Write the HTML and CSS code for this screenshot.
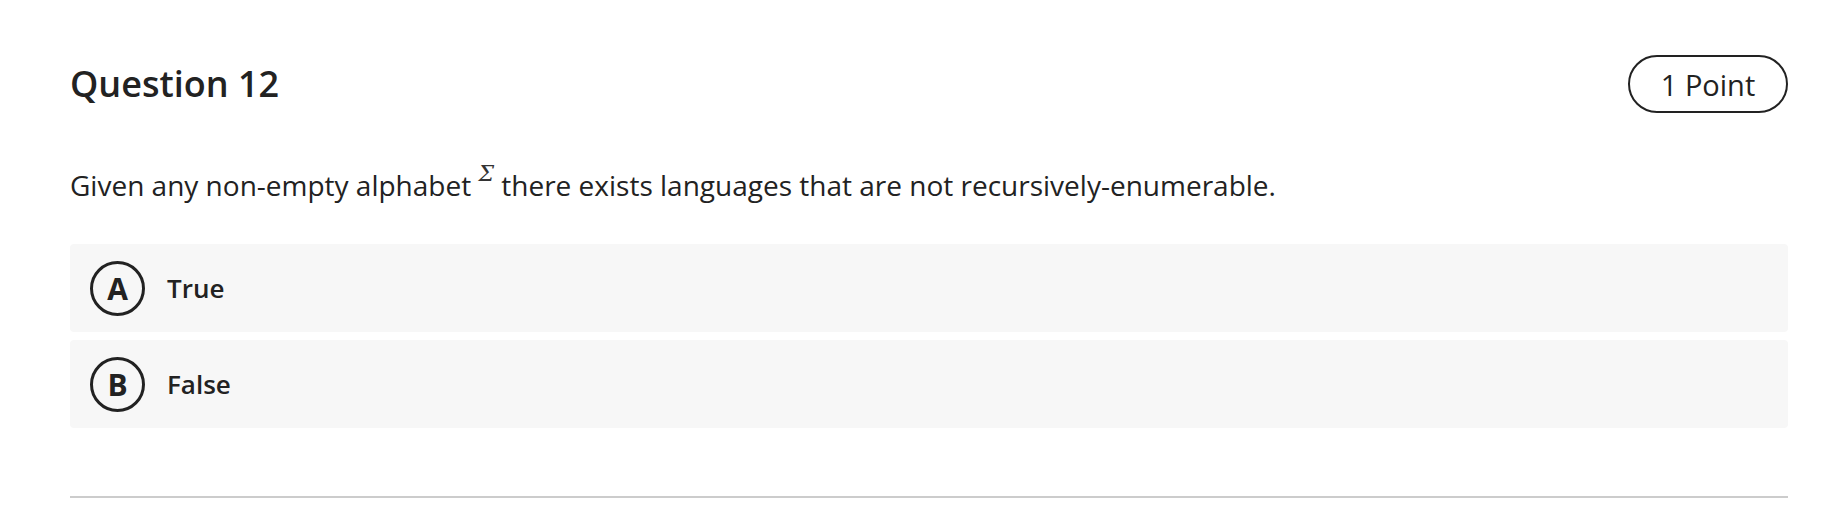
FILE: index.html
```html
<!DOCTYPE html>
<html lang="en">
<head>
<meta charset="utf-8">
<title>Question 12</title>
<link rel="stylesheet" href="styles.css">
</head>
<body>
<div class="page">
  <div class="q-header">
    <h2 class="q-title">Question 12</h2>
    <div class="q-points">1 Point</div>
  </div>
  <p class="q-text">Given any non-empty alphabet <span class="math">Σ</span> there exists languages that are not recursively-enumerable.</p>
  <div class="options">
    <div class="option">
      <span class="opt-letter">A</span>
      <span class="opt-label">True</span>
    </div>
    <div class="option">
      <span class="opt-letter">B</span>
      <span class="opt-label">False</span>
    </div>
  </div>
  <div class="divider"></div>
</div>
</body>
</html>
```

FILE: styles.css
```css
html, body {
  margin: 0;
  padding: 0;
  background: #ffffff;
}

body {
  font-family: "Open Sans", "Liberation Sans", sans-serif;
  color: #222222;
}

.page {
  padding: 55px 36px 0 70px;
}

.q-header {
  display: flex;
  justify-content: space-between;
  align-items: center;
  height: 58px;
}

.q-title {
  margin: 0;
  font-size: 36px;
  font-weight: 600;
  line-height: 48px;
  color: #222222;
}

.q-points {
  box-sizing: border-box;
  width: 160px;
  height: 58px;
  border: 2px solid #222222;
  border-radius: 29px;
  display: flex;
  align-items: center;
  justify-content: center;
  font-size: 29px;
  font-weight: 500;
  color: #222222;
}

.q-text {
  margin: 51px 0 0 0;
  font-size: 28px;
  line-height: 42px;
  color: #222222;
}

.math {
  font-family: "DejaVu Serif", serif;
  font-style: italic;
  font-size: 22px;
  vertical-align: 15px;
  line-height: 0;
  color: #333333;
}

.options {
  margin-top: 38px;
  display: flex;
  flex-direction: column;
  gap: 8px;
}

.option {
  height: 88px;
  box-sizing: border-box;
  padding: 0 20px;
  display: flex;
  align-items: center;
  gap: 22px;
  background: #f7f7f7;
  border-radius: 4px;
}

.opt-letter {
  box-sizing: border-box;
  width: 55px;
  height: 55px;
  border: 3px solid #222222;
  border-radius: 50%;
  display: flex;
  align-items: center;
  justify-content: center;
  font-size: 30px;
  font-weight: 700;
  color: #222222;
}

.opt-label {
  font-size: 26px;
  font-weight: 600;
  color: #222222;
}

.divider {
  margin-top: 68px;
  height: 2px;
  background: #cccccc;
}
```
